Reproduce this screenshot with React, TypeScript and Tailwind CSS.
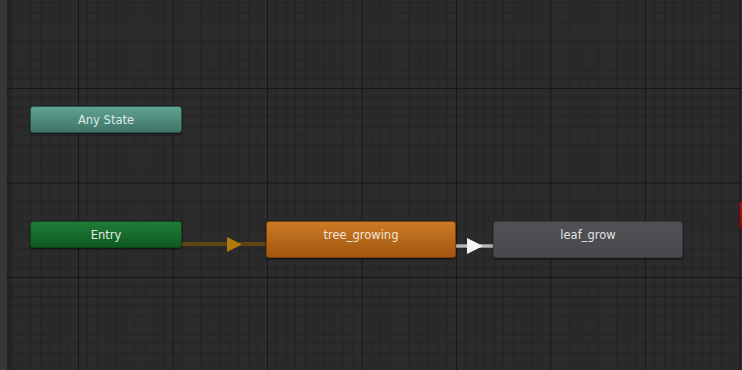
import React from "react";

function Grid() {
  const minor = [];
  for (let i = 1; i < 10; i++) {
    const p = Math.round(i * 9.45) + 0.5;
    minor.push(<line key={"v" + i} x1={p} y1={0} x2={p} y2={95} stroke="#232323" strokeWidth={1} />);
    minor.push(<line key={"h" + i} x1={0} y1={p} x2={95} y2={p} stroke="#232323" strokeWidth={1} />);
  }
  return (
    <svg className="absolute inset-0" width="735" height="370">
      <defs>
        <pattern id="grid" x="71" y="88" width="94.5" height="94.5" patternUnits="userSpaceOnUse">
          {minor}
          <line x1={0.5} y1={0} x2={0.5} y2={95} stroke="#171717" strokeWidth={1} />
          <line x1={0} y1={0.5} x2={95} y2={0.5} stroke="#171717" strokeWidth={1} />
        </pattern>
        <linearGradient id="shadow" x1="0" x2="1" y1="0" y2="0">
          <stop offset="0" stopColor="#000" stopOpacity="0.22" />
          <stop offset="1" stopColor="#000" stopOpacity="0" />
        </linearGradient>
      </defs>
      <rect x="0" y="0" width="735" height="370" fill="#2b2b2b" />
      <rect x="0" y="0" width="735" height="370" fill="url(#grid)" />
      <rect x="0" y="0" width="7" height="370" fill="url(#shadow)" />
    </svg>
  );
}

function Transitions() {
  return (
    <svg className="absolute inset-0 pointer-events-none" width="735" height="370">
      <line x1={175} y1={244} x2={259} y2={244} stroke="#5e4313" strokeWidth={4} />
      <polygon points="220,237 235,244.5 220,252" fill="#b07a10" />
      <line x1={449} y1={246} x2={486} y2={246} stroke="#8e8e8e" strokeWidth={4} />
      <line x1={449} y1={246} x2={486} y2={246} stroke="#c4c4c4" strokeWidth={1.5} />
      <polygon points="460,238 476,246 460,254" fill="#f4f4f4" />
    </svg>
  );
}

export default function App() {
  const font = { fontFamily: '"DejaVu Sans", Verdana, sans-serif' };
  return (
    <div className="w-[742px] h-[370px] flex overflow-hidden bg-[#2b2b2b]" style={font}>
      <div className="w-[7px] h-full bg-[#383838] shrink-0" />
      <div className="relative flex-1 h-full overflow-hidden">
        <Grid />
        <Transitions />

        <div className="absolute left-[23px] top-[106px] w-[152px] h-[27px] rounded-[3px] bg-gradient-to-b from-[#62a393] to-[#3d7567] border border-[#2b5148] shadow-[0_1px_2px_rgba(0,0,0,0.6)]">
          <div className="h-[25px] pt-[2px] flex items-center justify-center text-[11.5px] text-[#dfeae7]">Any State</div>
        </div>

        <div className="absolute left-[23px] top-[221px] w-[152px] h-[27px] rounded-[3px] bg-gradient-to-b from-[#207c38] to-[#0e5a21] border border-[#0b4519] shadow-[0_1px_2px_rgba(0,0,0,0.6)]">
          <div className="h-[25px] pt-[2px] flex items-center justify-center text-[11.5px] text-[#e4ece6]">Entry</div>
        </div>

        <div className="absolute left-[259px] top-[221px] w-[190px] h-[37px] rounded-[3px] bg-gradient-to-b from-[#cc7a24] to-[#a1560f] border border-[#7a410c] shadow-[0_1px_2px_rgba(0,0,0,0.6)]">
          <div className="h-[25px] pt-[2px] flex items-center justify-center text-[11.5px] text-[#f1e4d6]">tree_growing</div>
        </div>

        <div className="absolute left-[486px] top-[221px] w-[190px] h-[37px] rounded-[3px] bg-gradient-to-b from-[#505155] to-[#48494c] border border-[#3a3b3d] shadow-[0_1px_2px_rgba(0,0,0,0.6)]">
          <div className="h-[25px] pt-[2px] flex items-center justify-center text-[11.5px] text-[#e2e2e2]">leaf_grow</div>
        </div>

        <div className="absolute left-[732px] top-[201px] w-[30px] h-[29px] rounded-[3px] bg-gradient-to-b from-[#b01818] to-[#7e0c0c] border border-[#5e0808]" />
      </div>
    </div>
  );
}
